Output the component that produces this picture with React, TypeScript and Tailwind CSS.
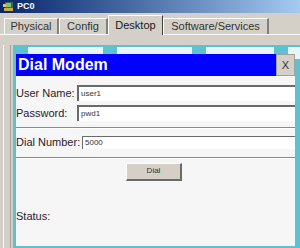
import React from 'react';

const font = { fontFamily: '"Liberation Sans", Arial, sans-serif' };

const Tab: React.FC<{ label: string; active?: boolean; width: string }> = ({ label, active, width }) => (
  <div
    className={
      active
        ? `${width} h-[20px] -mb-[1px] bg-[#d4d0c8] border-t border-l border-white border-r border-r-[#404040] flex items-center justify-center text-[11px] text-[#1a1a1a] whitespace-nowrap z-10`
        : `${width} h-[16px] bg-[#d4d0c8] border-t border-l border-white border-r-2 border-r-[#808080] flex items-center justify-center text-[11px] text-[#333] whitespace-nowrap`
    }
  >
    {label}
  </div>
);

const Field: React.FC<{ value: string }> = ({ value }) => (
  <div className="flex-1 h-[16px] bg-white border-t-2 border-l-2 border-t-[#6a6a6a] border-l-[#6a6a6a] flex items-center pl-[2px] text-[8px] text-[#333]">
    {value}
  </div>
);

const Divider = () => <div className="h-[2px] border-t border-[#8a8a8a] border-b border-b-white" />;

export default function App() {
  return (
    <div className="w-[300px] h-[248px] overflow-hidden bg-[#d4d0c8] flex flex-col" style={font}>
      {/* window title */}
      <div className="h-[13px] shrink-0 bg-gradient-to-r from-[#0a246a] to-[#a6caf0] flex items-center gap-[2px] pl-[3px]">
        <svg width="12" height="11" viewBox="0 0 12 11">
          <rect x="2" y="1" width="8" height="6" fill="#3a6a4a" />
          <rect x="3" y="2" width="5" height="4" fill="#7ec46a" />
          <rect x="1" y="7" width="9" height="3" fill="#c9a94a" />
          <rect x="0" y="3" width="3" height="3" fill="#e0c060" />
        </svg>
        <span className="text-[9px] font-bold text-white leading-none">PC0</span>
      </div>

      {/* tabs */}
      <div className="h-[21px] shrink-0 flex items-end pl-[4px]">
        <Tab label="Physical" width="w-[55px]" />
        <Tab label="Config" width="w-[49px]" />
        <Tab label="Desktop" width="w-[55px]" active />
        <Tab label="Software/Services" width="w-[106px]" />
      </div>

      {/* tab panel */}
      <div className="flex-1 border-t border-white flex pt-[10px]">
        <div className="w-[13px] shrink-0 flex">
          <div className="w-[3px]" />
          <div className="w-[1px] bg-white" />
          <div className="w-[6px]" />
          <div className="w-[1px] bg-[#a8a49c]" />
        </div>
        <div className="flex-1 relative bg-[#5cc2d2]">
          {/* desktop tiles behind the window */}
          <div className="flex gap-[14px] pl-[15px] pt-[2px]">
            <div className="w-[75px] h-[12px] bg-[#e8f4f6] border-t border-white" />
            <div className="w-[75px] h-[12px] bg-[#e8f4f6] border-t border-white" />
            <div className="w-[68px] h-[12px] bg-[#e8f4f6] border-t border-white" />
            <div className="w-[40px] h-[12px] bg-[#e8f4f6] border-t border-white" />
          </div>

          {/* dial modem window */}
          <div className="absolute left-[3px] top-[9px] w-[279px] h-[192px] bg-[#f6f6f6] flex flex-col">
            <div className="h-[22px] shrink-0 flex">
              <div className="flex-1 bg-[#0000ff] flex items-center pl-[2px]">
                <span className="text-[16px] font-bold text-white leading-none">Dial Modem</span>
              </div>
              <div className="w-[19px] bg-[#d4d0c8] border border-[#a0a0a0] flex items-center justify-center text-[11px] text-[#333]">
                X
              </div>
            </div>

            <div className="pt-[9px] flex flex-col gap-[3px]">
              <div className="flex items-center">
                <span className="w-[61px] shrink-0 text-[11px] text-[#2a1a2a] whitespace-nowrap">User Name:</span>
                <Field value="user1" />
              </div>
              <div className="flex items-center">
                <span className="w-[61px] shrink-0 text-[11px] text-[#2a1a2a] whitespace-nowrap">Password:</span>
                <Field value="pwd1" />
              </div>
            </div>

            <div className="mt-[6px]">
              <Divider />
            </div>

            <div className="flex items-center pt-[5px]">
              <span className="w-[66px] shrink-0 text-[11px] text-[#2a1a2a] whitespace-nowrap">Dial Number:</span>
              <div className="flex-1 h-[13px] bg-white border-t border-l border-[#6a6a6a] flex items-center pl-[2px] text-[8px] text-[#333]">
                5000
              </div>
            </div>

            <div className="mt-[6px]">
              <Divider />
            </div>

            <div className="flex justify-center pt-[4px] pr-[3px]">
              <div className="w-[56px] h-[18px] bg-[#d4d0c8] border-r-2 border-b-2 border-[#6a6a6a] border-t border-l border-t-white border-l-white flex items-center justify-center text-[8px] text-[#333]">
                Dial
              </div>
            </div>

            <div className="pt-[29px] text-[11px] leading-[13px] text-[#2a1a2a]">Status:</div>
          </div>
        </div>
      </div>
    </div>
  );
}
